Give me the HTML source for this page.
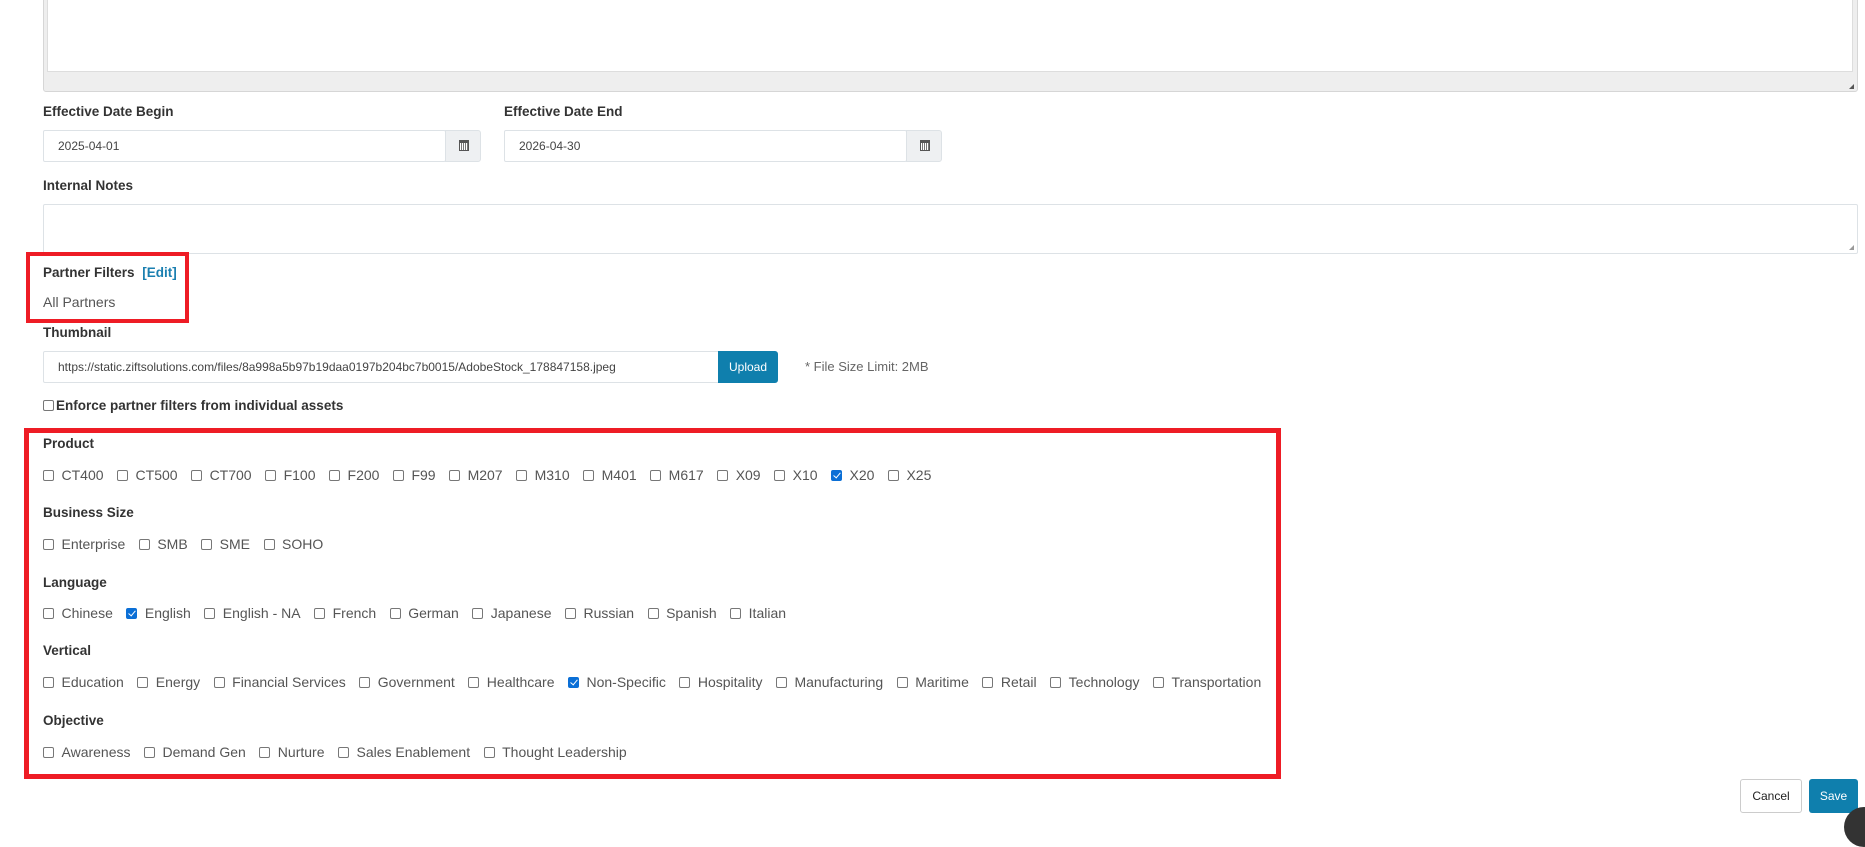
<!DOCTYPE html>
<html><head><meta charset="utf-8"><style>
*{box-sizing:border-box;margin:0;padding:0}
body{width:1865px;height:815px;overflow:hidden;background:#fff;font-family:"Liberation Sans",sans-serif;position:relative;color:#555}
.a{position:absolute}
.lbl{position:absolute;font-weight:bold;font-size:13.5px;color:#333;line-height:16px}
.inp{position:absolute;border:1px solid #dde2e6;background:#fff;border-radius:2px;font-size:12px;color:#444;line-height:30px;padding-left:14px}
.addon{position:absolute;background:#eef0f2;border:1px solid #dde2e6;border-radius:0 3px 3px 0}
.row{position:absolute;left:43px;font-size:14px;color:#555;white-space:nowrap;line-height:16px}
.row span{display:inline-block;margin-right:13.5px}
.cb{display:inline-block;width:11px;height:11px;border:1px solid #777;border-radius:2px;vertical-align:-1px;margin-right:7.5px;background:#fff;position:relative}
.ck{background:#0b6fd6;border-color:#0b6fd6}
.ck:after{content:"";position:absolute;left:3px;top:0px;width:3px;height:6px;border:solid #fff;border-width:0 1.5px 1.5px 0;transform:rotate(40deg)}
.cal{position:absolute;left:13px;top:9px;width:10px;height:11px;border:1px solid #555;border-top-width:3px;background:repeating-linear-gradient(90deg,#fff 0 1px,#777 1px 2px)}
</style></head><body>
<div class="a" style="left:43px;top:-5px;width:1815px;height:97px;background:#eee;border:1px solid #d6d6d6;border-radius:3px"></div>
<div class="a" style="left:47px;top:-5px;width:1806px;height:77px;background:#fff;border:1px solid #ddd"></div>
<div class="a" style="left:1849px;top:84px;width:0;height:0;border-left:5px solid transparent;border-bottom:5px solid #555"></div>

<div class="lbl" style="left:43px;top:104px">Effective Date Begin</div>
<div class="lbl" style="left:504px;top:104px">Effective Date End</div>
<div class="inp" style="left:43px;top:130px;width:403px;height:32px">2025-04-01</div>
<div class="addon" style="left:445px;top:130px;width:36px;height:32px"><div class="cal"></div></div>
<div class="inp" style="left:504px;top:130px;width:403px;height:32px">2026-04-30</div>
<div class="addon" style="left:906px;top:130px;width:36px;height:32px"><div class="cal"></div></div>

<div class="lbl" style="left:43px;top:178px">Internal Notes</div>
<div class="a" style="left:43px;top:204px;width:1815px;height:50px;border:1px solid #dde2e6;border-radius:2px"></div>
<div class="a" style="left:1849px;top:245px;width:0;height:0;border-left:5px solid transparent;border-bottom:5px solid #999"></div>

<div class="a" style="left:26px;top:252px;width:163px;height:71px;border:4px solid #ee1c25"></div>
<div class="lbl" style="left:43px;top:265px">Partner Filters <span style="color:#1a7fb0;margin-left:4px">[Edit]</span></div>
<div class="a" style="left:43px;top:294px;font-size:14px;color:#555">All Partners</div>

<div class="lbl" style="left:43px;top:325px">Thumbnail</div>
<div class="inp" style="left:43px;top:351px;width:676px;height:32px;border-radius:2px 0 0 2px">https://static.ziftsolutions.com/files/8a998a5b97b19daa0197b204bc7b0015/AdobeStock_178847158.jpeg</div>
<div class="a" style="left:718px;top:351px;width:60px;height:32px;background:#0f7fad;border-radius:0 3px 3px 0;color:#fff;font-size:12px;line-height:32px;text-align:center">Upload</div>
<div class="a" style="left:805px;top:359px;font-size:13px;color:#666">* File Size Limit: 2MB</div>

<div class="lbl" style="left:43px;top:398px"><span class="cb" style="margin-right:2px"></span>Enforce partner filters from individual assets</div>

<div class="a" style="left:24px;top:428px;width:1257px;height:351px;border:5px solid #ee1c25"></div>

<div class="lbl" style="left:43px;top:436px">Product</div>
<div class="row" style="top:467px"><span><i class="cb"></i>CT400</span><span><i class="cb"></i>CT500</span><span><i class="cb"></i>CT700</span><span><i class="cb"></i>F100</span><span><i class="cb"></i>F200</span><span><i class="cb"></i>F99</span><span><i class="cb"></i>M207</span><span><i class="cb"></i>M310</span><span><i class="cb"></i>M401</span><span><i class="cb"></i>M617</span><span><i class="cb"></i>X09</span><span><i class="cb"></i>X10</span><span><i class="cb ck"></i>X20</span><span><i class="cb"></i>X25</span></div>

<div class="lbl" style="left:43px;top:505px">Business Size</div>
<div class="row" style="top:536px"><span><i class="cb"></i>Enterprise</span><span><i class="cb"></i>SMB</span><span><i class="cb"></i>SME</span><span><i class="cb"></i>SOHO</span></div>

<div class="lbl" style="left:43px;top:575px">Language</div>
<div class="row" style="top:605px"><span><i class="cb"></i>Chinese</span><span><i class="cb ck"></i>English</span><span><i class="cb"></i>English - NA</span><span><i class="cb"></i>French</span><span><i class="cb"></i>German</span><span><i class="cb"></i>Japanese</span><span><i class="cb"></i>Russian</span><span><i class="cb"></i>Spanish</span><span><i class="cb"></i>Italian</span></div>

<div class="lbl" style="left:43px;top:643px">Vertical</div>
<div class="row" style="top:674px"><span><i class="cb"></i>Education</span><span><i class="cb"></i>Energy</span><span><i class="cb"></i>Financial Services</span><span><i class="cb"></i>Government</span><span><i class="cb"></i>Healthcare</span><span><i class="cb ck"></i>Non-Specific</span><span><i class="cb"></i>Hospitality</span><span><i class="cb"></i>Manufacturing</span><span><i class="cb"></i>Maritime</span><span><i class="cb"></i>Retail</span><span><i class="cb"></i>Technology</span><span><i class="cb"></i>Transportation</span></div>

<div class="lbl" style="left:43px;top:713px">Objective</div>
<div class="row" style="top:744px"><span><i class="cb"></i>Awareness</span><span><i class="cb"></i>Demand Gen</span><span><i class="cb"></i>Nurture</span><span><i class="cb"></i>Sales Enablement</span><span><i class="cb"></i>Thought Leadership</span></div>

<div class="a" style="left:1740px;top:779px;width:62px;height:34px;border:1px solid #ccc;border-radius:3px;font-size:12px;color:#222;text-align:center;line-height:32px">Cancel</div>
<div class="a" style="left:1809px;top:779px;width:49px;height:34px;background:#0f7fad;border-radius:3px;font-size:12px;color:#fff;text-align:center;line-height:34px">Save</div>
<div class="a" style="left:1844px;top:807px;width:40px;height:40px;border-radius:50%;background:#333"></div>
</body></html>
